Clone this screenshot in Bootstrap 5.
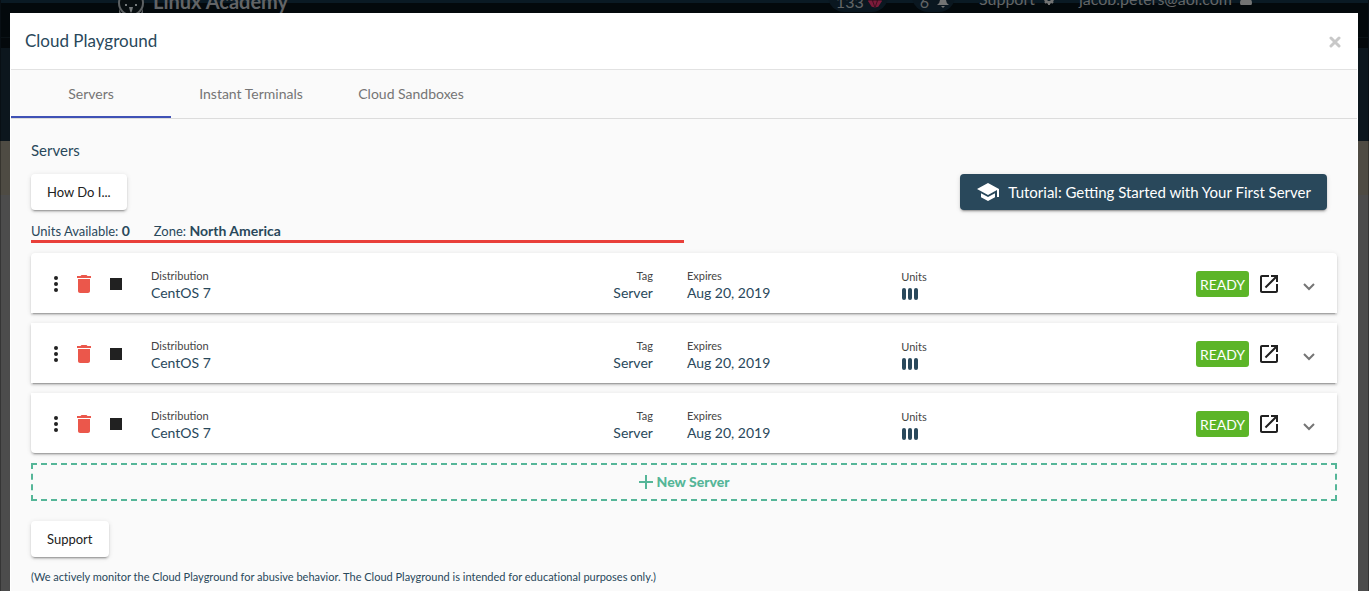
<!DOCTYPE html>
<html lang="en">
<head>
<meta charset="utf-8">
<meta name="viewport" content="width=device-width, initial-scale=1">
<title>Cloud Playground</title>
<link href="https://cdn.jsdelivr.net/npm/bootstrap@5.3.0/dist/css/bootstrap.min.css" rel="stylesheet">
<style>
  body { font-family: Lato, "Open Sans", sans-serif; font-size: 14px; line-height: 18px; color: #29485b; background: #4c4c4c; overflow: hidden; }
  svg { display: block; flex: none; }
  button { font-family: inherit; }

  /* dimmed page behind the dialog */
  .backpage { inset: 0; background: linear-gradient(#0c161d 0 141px, #4e4b43 141px 195px, #4c4c4c 195px); border-left: 1px solid rgba(0,0,0,.3); border-right: 1px solid rgba(0,0,0,.3); }
  .backnav { height: 48px; padding: 0 116px; background: linear-gradient(#0a1a24 0 3px, #03090c 3px 37px, #0a1216 37px 38px, #04090c 38px); color: #636667; }
  .backnav .line-box { height: 8px; }
  .backnav a { color: inherit; text-decoration: none; font-size: 16px; }
  .backnav .brand-name { font-size: 20px; font-weight: 700; color: #626466; line-height: 14px; }
  .brand-mark { margin-bottom: -8px; }
  .pill { height: 32px; margin-bottom: -4px; padding: 16px 6px 0 8px; background: #0a1720; border-radius: 16px; font-size: 16px; line-height: 12px; }

  .dialog { margin: 13px 11px 0 10px; background: #fafafa; min-height: calc(100vh - 13px); border-left: 1px solid #fff; border-right: 1px solid #fff; }
  .dialog-head { height: 57px; padding: 0 14px; background: #fff; border-bottom: 1px solid #e2e2e2; }
  .dialog-head h1 { font-size: 17px; line-height: 24px; }

  .tabs { border-bottom: 1px solid #dcdcdc; }
  .tabs .nav-link { width: 160px; height: 48px; padding: 2px 0 0; border-radius: 0; border-bottom: 2px solid transparent; color: #757575; font-size: 14px; }
  .tabs .nav-link.active { border-color: #3f51b5; }

  .content { padding: 22px 20px 0; }
  .content h2 { margin-bottom: 14px; font-size: 15px; line-height: 19px; }
  .top-buttons { padding-right: 10px; }
  .raised { height: 36px; padding: 0 16px; border: 0; border-radius: 4px; background: #fff; color: #212121; font-size: 13px; }
  .raised, .server-row { box-shadow: 0 3px 1px -2px rgba(0,0,0,.2), 0 2px 2px rgba(0,0,0,.14), 0 1px 5px rgba(0,0,0,.12); }
  .raised.tutorial { background: #29485b; color: #fff; font-size: 15px; }
  .summary { margin-top: 12px; font-size: 13px; }
  .summary b { font-size: 14px; }
  .usage { height: 3px; background: #e9403a; }

  .servers { gap: 10px; margin: 10px 0; }
  .server-row { height: 60px; padding-top: 2px; background: #fff; }
  .server-row:first-child { border-radius: 4px 4px 0 0; }
  .server-row:last-child { border-radius: 0 0 4px 4px; }
  .row-actions { width: 120px; padding-left: 13px; }
  .row-facts { display: grid; grid-template-columns: 20fr 8fr 11fr; }
  .row-facts dl { margin: 0; line-height: 17px; }
  .row-facts dt { font-size: 11px; font-weight: 400; color: #444; }
  .row-facts dd { margin: 0; }
  .tag-fact { margin-right: 34px; }
  .unit-bars { gap: 2px; padding: 3px 0 0 1px; }
  .unit-bar { width: 4px; height: 12px; border-radius: 2px; background: #29485b; }
  .ready { width: 53px; height: 26px; padding-top: 2px; border-radius: 3px; background: #5cb528; color: #fff; }
  .bare { padding: 0; border: 0; background: none; color: #212121; }
  .bare.close-x { color: #c8c8c8; }
  .expand { margin: 6px 22px 0; }
  .new-server { height: 38px; padding: 0; border: 2px dashed #55b698; background: none; color: #55b698; font-weight: 900; }
  .support { display: block; margin: 20px 0 12px; }
  .notice { font-size: 11px; line-height: 16px; font-variant-ligatures: none; }
</style>
</head>
<body>

<div class="backpage position-absolute overflow-hidden">
  <nav class="backnav d-flex justify-content-between">
    <div class="line-box d-flex align-items-end gap-2">
      <svg class="brand-mark" width="28" height="26" viewBox="0 0 28 26"><circle cx="14" cy="13" r="12" fill="#080e11" stroke="#5d6163" stroke-width="2"/><path d="M2 18v8h5q-4-3-5-8zM26 18v8h-5q4-3 5-8z" fill="#5d6163"/><path d="M12 17h4l-1 4-1 2-1-2zM8 14h2v2H8zM18 14h2v2h-2z" fill="#74787a"/></svg>
      <span class="brand-name">Linux Academy</span>
    </div>
    <div class="line-box d-flex align-items-end">
      <div class="pill d-flex gap-1">133
        <svg width="14" height="12" viewBox="0 0 15 12"><path d="M3 0h9l3 5-4 6-3.500 1L4 11 0 5z" fill="#7c1b3b"/><path d="M0 4h15M3 0l2 5 2.500 7L10 5l2-5M5 5l2.500-5L10 5" stroke="#38101f" fill="none"/></svg>
      </div>
      <div class="pill d-flex gap-2 ms-4">6
        <svg width="12" height="12" viewBox="0 0 12 12"><path d="M3 0h6v4q0 3 3 5H0q3-2 3-5zM4 10h4l-2 2z" fill="#737474"/></svg>
      </div>
      <a href="#" class="d-flex align-items-center gap-2 ms-4">Support
        <svg width="12" height="12" viewBox="0 0 12 12"><circle cx="6" cy="6" r="3.500" fill="none" stroke="#737474" stroke-width="3"/><path d="M6 0v2M6 10v2M0 6h2M10 6h2M2 2l1.500 1.500M8.500 8.500L10 10M10 2L8.500 3.500M2 10l1.500-1.500" stroke="#737474" stroke-width="2"/></svg>
      </a>
      <a href="#" class="d-flex align-items-center gap-2 ms-4">jacob.peters@aol.com
        <svg width="12" height="12" viewBox="0 0 12 12"><circle cx="6" cy="3" r="3" fill="#737474"/><path d="M0 10q0-5 6-5t6 5q0 2-1 2H1q-1 0-1-2z" fill="#737474"/></svg>
      </a>
    </div>
  </nav>
</div>

<main class="dialog position-relative">
  <header class="dialog-head d-flex align-items-center justify-content-between">
    <h1 class="m-0 fw-normal">Cloud Playground</h1>
    <button class="bare close-x" aria-label="Close"><svg width="16" height="14" viewBox="0 0 16 14"><path d="M4 4l8 8M12 4l-8 8" stroke="currentColor" stroke-width="3" stroke-linecap="round"/></svg></button>
  </header>

  <nav class="tabs nav">
    <a href="#" class="nav-link active d-flex align-items-center justify-content-center" aria-current="page">Servers</a>
    <a href="#" class="nav-link d-flex align-items-center justify-content-center">Instant Terminals</a>
    <a href="#" class="nav-link d-flex align-items-center justify-content-center">Cloud Sandboxes</a>
  </nav>

  <section class="content">
    <h2 class="fw-normal">Servers</h2>
    <div class="top-buttons d-flex justify-content-between">
      <button class="raised">How Do I...</button>
      <button class="raised tutorial d-flex align-items-center gap-2"><svg width="24" height="24" viewBox="0 0 24 24" fill="currentColor"><path d="M5 13.180v4L12 21l7-3.820v-4L12 17zM12 3L1 9l11 6 9-4.910V17h2V9z"/></svg>Tutorial: Getting Started with Your First Server</button>
    </div>
    <div class="summary d-flex gap-4"><span>Units Available: <b>0</b></span><span>Zone: <b>North America</b></span></div>
    <div class="usage w-50"></div>

    <div class="servers d-flex flex-column" id="servers"></div>

    <button class="new-server w-100 d-flex align-items-center justify-content-center gap-1"><svg width="14" height="14" viewBox="0 0 14 14"><path d="M7 0v14M0 7h14" stroke="currentColor" stroke-width="2"/></svg>New Server</button>
    <button class="raised support">Support</button>
    <p class="notice mb-0">(We actively monitor the Cloud Playground for abusive behavior. The Cloud Playground is intended for educational purposes only.)</p>
  </section>
</main>

<template id="server-template">
  <article class="server-row d-flex align-items-center">
    <div class="row-actions d-flex align-items-center">
      <button class="bare" aria-label="More"><svg width="24" height="24" viewBox="0 0 24 24" fill="currentColor"><circle cx="12" cy="6" r="2"/><circle cx="12" cy="12" r="2"/><circle cx="12" cy="18" r="2"/></svg></button>
      <button class="bare ms-1" aria-label="Delete"><svg width="24" height="24" viewBox="0 0 24 24" fill="#eb574b"><path d="M6 19c0 1.100.9 2 2 2h8c1.100 0 2-.9 2-2V7H6zM19 4h-3.500l-1-1h-5l-1 1H5v2h14z"/></svg></button>
      <button class="bare ms-2" aria-label="Stop"><svg width="24" height="24" viewBox="0 0 24 24" fill="currentColor"><path d="M6 6h12v12H6z"/></svg></button>
    </div>
    <div class="row-facts flex-grow-1 align-items-center">
      <div class="d-flex justify-content-between tag-fact">
        <dl><dt>Distribution</dt><dd>CentOS 7</dd></dl>
        <dl class="text-end"><dt>Tag</dt><dd>Server</dd></dl>
      </div>
      <dl><dt>Expires</dt><dd>Aug 20, 2019</dd></dl>
      <dl><dt>Units</dt><dd class="unit-bars d-flex"><i class="unit-bar"></i><i class="unit-bar"></i><i class="unit-bar"></i></dd></dl>
    </div>
    <span class="ready d-flex align-items-center justify-content-center">READY</span>
    <button class="bare ms-2" aria-label="Open terminal"><svg width="24" height="24" viewBox="0 0 24 24" fill="currentColor"><path d="M19 19H5V5h7V3H5c-1.110 0-2 .9-2 2v14c0 1.100.89 2 2 2h14c1.100 0 2-.9 2-2v-7h-2zM14 3v2h3.590l-9.830 9.830 1.410 1.410L19 6.410V10h2V3z"/></svg></button>
    <button class="bare expand" aria-label="Show details"><svg width="12" height="8" viewBox="0 0 12 8"><path d="M1 1l5 5 5-5" fill="none" stroke="#757575" stroke-width="2"/></svg></button>
  </article>
</template>

<script>
  const list = document.getElementById('servers');
  const template = document.getElementById('server-template');
  for (let i = 0; i < 3; i++) list.append(template.content.cloneNode(true));
</script>
<script src="https://cdn.jsdelivr.net/npm/bootstrap@5.3.0/dist/js/bootstrap.bundle.min.js"></script>
</body>
</html>
